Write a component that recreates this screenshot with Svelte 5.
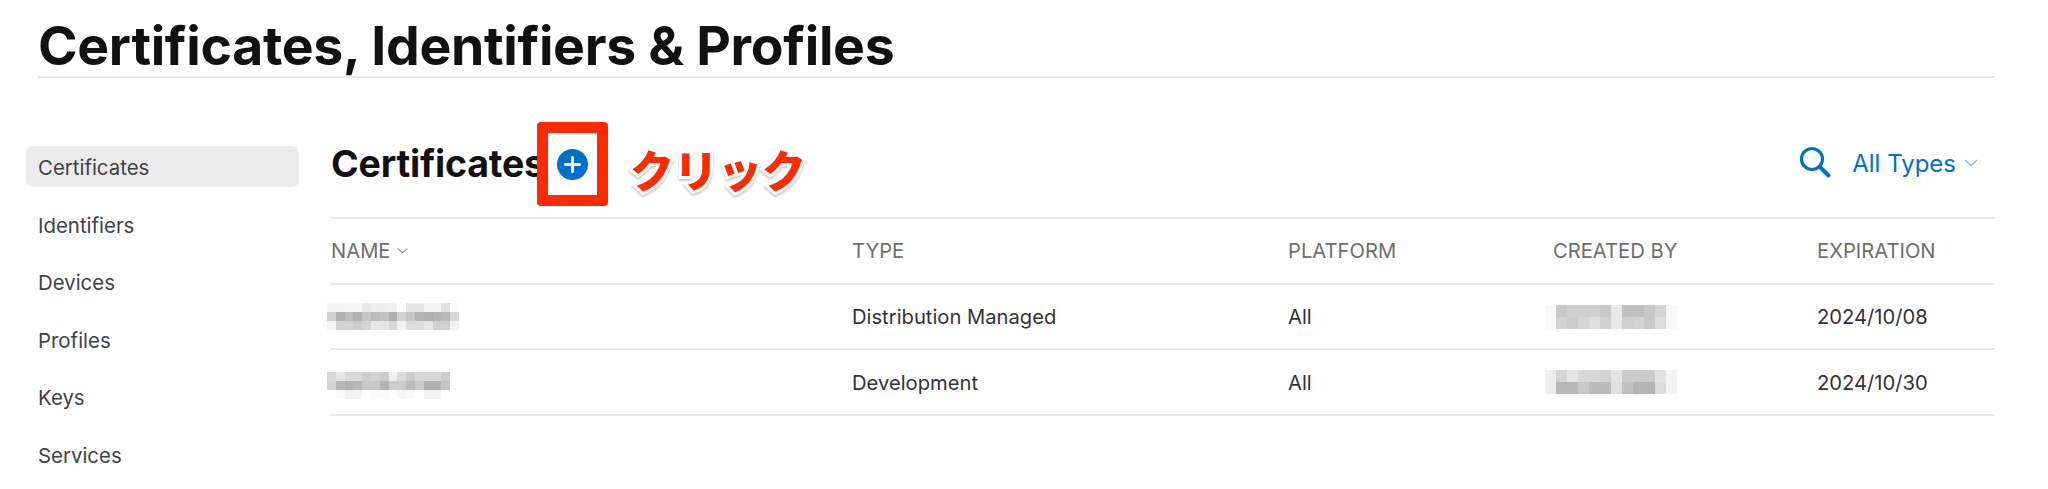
<script lang="ts">
    const navItems = ['Certificates', 'Identifiers', 'Devices', 'Profiles', 'Keys', 'Services'];

    // Pixelated (redacted) names, one grey value per mosaic cell
    const nameMosaics = [
        [
            [0xf5, 0xf5, 0xf7, 0xf7, 0xe8, 0xee, 0xee, 0xf0, 0xff, 0xe6, 0xe6, 0xf3, 0xf3, 0xe0, 0xfb],
            [0xd0, 0xb0, 0xbc, 0xb0, 0xc6, 0xbc, 0xc2, 0xae, 0xd2, 0xc4, 0xb4, 0xae, 0xb4, 0xb8, 0xd8],
            [0xf4, 0xd2, 0xd2, 0xcc, 0xd4, 0xe8, 0xe6, 0xd8, 0xf2, 0xdc, 0xdc, 0xe6, 0xd0, 0xd0, 0xf2]
        ],
        [
            [0xd8, 0xe4, 0xd8, 0xd8, 0xcc, 0xd4, 0xcc, 0xf0, 0xdc, 0xcc, 0xd8, 0xd8, 0xd8, 0xcc],
            [0xd4, 0xb6, 0xb2, 0xb6, 0xc8, 0xc8, 0xb2, 0xcc, 0xcc, 0xbc, 0xcc, 0xb0, 0xb0, 0xc4],
            [0xff, 0xfa, 0xf2, 0xf2, 0xff, 0xfb, 0xfb, 0xff, 0xf6, 0xfa, 0xff, 0xf4, 0xf4, 0xff]
        ]
    ];
    const creatorMosaics = [
        [
            [0xf8, 0xc8, 0xd0, 0xd0, 0xd0, 0xc8, 0xe8, 0xc0, 0xc0, 0xc8, 0xd4, 0xf8],
            [0xf8, 0xd2, 0xcc, 0xd6, 0xde, 0xd0, 0xe8, 0xd0, 0xd4, 0xc8, 0xdc, 0xf8]
        ],
        [
            [0xee, 0xd4, 0xe4, 0xd8, 0xd8, 0xd4, 0xe4, 0xcc, 0xcc, 0xcc, 0xe2, 0xf4],
            [0xee, 0xb8, 0xb8, 0xc8, 0xbc, 0xbc, 0xe0, 0xc0, 0xb4, 0xb4, 0xdc, 0xf4]
        ]
    ];

    const rows = [
        { name: nameMosaics[0], type: 'Distribution Managed', platform: 'All', creator: creatorMosaics[0], expiration: '2024/10/08' },
        { name: nameMosaics[1], type: 'Development', platform: 'All', creator: creatorMosaics[1], expiration: '2024/10/30' }
    ];

    const grey = (v: number) => `rgb(${v},${v},${v})`;
</script>

{#snippet mosaic(cells: number[][], kind: string)}
    <div class="mosaic {kind}">
        {#each cells as line}
            <div class="mosaic-line">
                {#each line as v}
                    <span style="background:{grey(v)}"></span>
                {/each}
            </div>
        {/each}
    </div>
{/snippet}

<div class="page">
    <h1 class="page-title">Certificates, Identifiers &amp; Profiles</h1>

    <div class="content">
        <nav class="sidebar">
            {#each navItems as item, i}
                <div class="nav-item" class:active={i === 0}>{item}</div>
            {/each}
        </nav>

        <main class="main">
            <header class="section-head">
                <h2>Certificates</h2>
                <button class="add-button" aria-label="Add">
                    <svg width="31" height="31" viewBox="0 0 31 31">
                        <circle cx="15.5" cy="15.5" r="15.5" fill="#0070c9" />
                        <path d="M15.5 8.5v14M8.5 15.5h14" stroke="#fff" stroke-width="3" stroke-linecap="round" />
                    </svg>
                </button>
                <div class="callout-box"></div>
                <span class="callout-text">クリック</span>

                <div class="section-tools">
                    <svg class="search" width="34" height="34" viewBox="0 0 34 34" fill="none" stroke="#0070c9">
                        <circle cx="14" cy="13" r="10.5" stroke-width="3.2" />
                        <path d="M22 21l8.5 8.5" stroke-width="4" stroke-linecap="round" />
                    </svg>
                    <span class="filter">All Types</span>
                    <svg width="14" height="8" viewBox="0 0 14 8" fill="none">
                        <path d="M1 1l6 5.5L13 1" stroke="#8fbce6" stroke-width="1.6" />
                    </svg>
                </div>
            </header>

            <div class="table">
                <div class="row head">
                    <div class="name-head">
                        NAME
                        <svg width="11" height="6" viewBox="0 0 11 6" fill="none">
                            <path d="M.7.7l4.8 4 4.8-4" stroke="#8a8a8e" stroke-width="1.1" />
                        </svg>
                    </div>
                    <div>TYPE</div>
                    <div>PLATFORM</div>
                    <div>CREATED BY</div>
                    <div>EXPIRATION</div>
                </div>
                {#each rows as row}
                    <div class="row">
                        <div>{@render mosaic(row.name, 'name')}</div>
                        <div>{row.type}</div>
                        <div>{row.platform}</div>
                        <div>{@render mosaic(row.creator, 'creator')}</div>
                        <div>{row.expiration}</div>
                    </div>
                {/each}
            </div>
        </main>
    </div>
</div>

<style>
    :global(body) {
        margin: 0;
        background: #fff;
        overflow: hidden;
    }

    .page {
        height: 489px;
        overflow: hidden;
        font-family: Inter, 'Liberation Sans', sans-serif;
        color: #333;
    }

    .page-title {
        margin: 0 53px 0 38px;
        height: 76px;
        border-bottom: 2px solid #e8e8e8;
        font-size: 53.5px;
        line-height: 92px;
        font-weight: 700;
        color: #111;
        letter-spacing: -0.3px;
        white-space: nowrap;
    }

    .content {
        display: flex;
        padding: 54px 53px 0 26px;
    }

    .sidebar {
        width: 273px;
        flex-shrink: 0;
        display: flex;
        flex-direction: column;
        gap: 16.6px;
        margin: 14px 32px 0 0;
    }

    .nav-item {
        height: 41px;
        line-height: 43px;
        padding-left: 12px;
        border-radius: 7px;
        font-size: 20.4px;
        color: #424245;
    }

    .nav-item.active {
        background: #ececec;
    }

    .main {
        flex: 1;
        min-width: 0;
    }

    .section-head {
        position: relative;
        display: flex;
        align-items: center;
        height: 62px;
        padding-bottom: 23px;
        border-bottom: 2px solid #e8e8e8;
    }

    .section-head h2 {
        margin: 0;
        font-size: 37.5px;
        font-weight: 700;
        color: #111;
        letter-spacing: -0.2px;
    }

    .add-button {
        position: absolute;
        left: 226px;
        top: 17px;
        width: 31px;
        height: 31px;
        padding: 0;
        border: 0;
        background: none;
        display: block;
    }

    .add-button svg {
        display: block;
    }

    /* Annotations drawn over the screenshot */
    .callout-box {
        position: absolute;
        left: 206px;
        top: -10px;
        width: 71px;
        height: 84px;
        box-sizing: border-box;
        border: 11px solid #ff2a00;
        border-radius: 4px;
    }

    .callout-text {
        position: absolute;
        left: 299px;
        top: 7px;
        font-family: 'Noto Sans CJK JP', sans-serif;
        font-size: 44px;
        line-height: 60px;
        font-weight: 900;
        color: #ff2a00;
        -webkit-text-stroke: 6px #fff;
        paint-order: stroke fill;
        filter: drop-shadow(0 2px 1px rgba(0, 0, 0, 0.22));
        white-space: nowrap;
    }

    .section-tools {
        margin-left: auto;
        margin-right: 17px;
        display: flex;
        align-items: center;
    }

    .search {
        margin-right: 20px;
    }

    .filter {
        font-size: 24px;
        color: #0070c9;
        margin-right: 8px;
    }

    .row {
        display: grid;
        grid-template-columns: 521px 436px 265px 264px 177px;
        align-items: center;
        height: 63.7px;
        border-bottom: 2px solid #e8e8e8;
        font-size: 20.2px;
        color: #333;
    }

    .row.head {
        color: #6e6e6e;
    }

    .name-head {
        display: flex;
        align-items: center;
        gap: 6px;
    }

    .mosaic {
        display: flex;
        flex-direction: column;
        filter: blur(0.7px);
    }

    .mosaic-line {
        display: flex;
    }

    .mosaic-line span {
        display: block;
    }

    .mosaic.name {
        margin-left: -4px;
    }

    .row:last-child .mosaic.name {
        margin-top: 6px;
    }

    .mosaic.name .mosaic-line span {
        width: 8.8px;
        height: 9px;
    }

    .mosaic.creator {
        margin-left: -8px;
    }

    .mosaic.creator .mosaic-line span {
        width: 11px;
        height: 12px;
    }
</style>
